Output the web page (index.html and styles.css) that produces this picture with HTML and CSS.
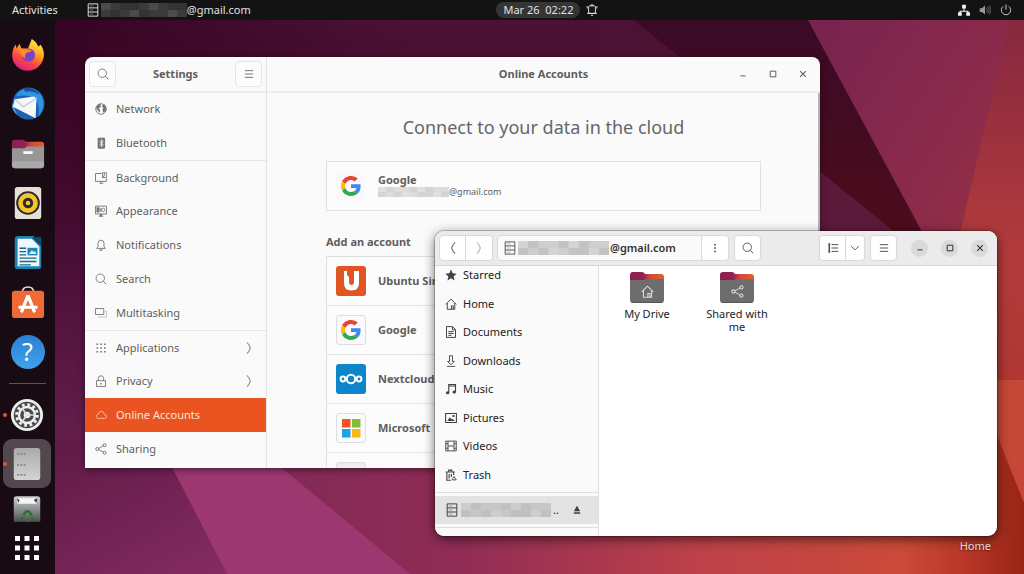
FILE: index.html
```html
<!DOCTYPE html>
<html lang="en">
<head>
<meta charset="utf-8">
<title>Online Accounts</title>
<link rel="stylesheet" href="styles.css">
</head>
<body class="screen">
<svg class="defs" aria-hidden="true">
  <symbol id="server" viewBox="0 0 16 16"><path d="M2.500 1h11v14h-11zM2.500 5.600h11M2.500 10.300h11" fill="none" stroke="currentColor" stroke-width="1.100"/><path d="M4.500 3.300h4M4.500 8h4M4.500 12.700h4" stroke="currentColor" stroke-width=".8" opacity=".6"/></symbol>
  <symbol id="search" viewBox="0 0 16 16"><circle cx="7" cy="7" r="5.600" fill="none" stroke="currentColor" stroke-width="1.200"/><path d="M11 11l4 4" stroke="currentColor" stroke-width="1.300"/></symbol>
  <symbol id="menu" viewBox="0 0 16 16"><path d="M2.500 3.500h11M2.500 8h11M2.500 12.500h11" stroke="currentColor" stroke-width="1.300"/></symbol>
  <symbol id="home" viewBox="0 0 16 16"><path d="M1 8.500L8 1.500l7 7M3 7v8h10V7M8.500 15v-4.500H11V15" fill="none" stroke="currentColor" stroke-width="1.300"/></symbol>
  <symbol id="share" viewBox="0 0 16 16"><path d="M5 7.200l6-3.500M5 8.800l6 3.500" stroke="currentColor" stroke-width="1.200"/><g fill="none" stroke="currentColor" stroke-width="1.300"><circle cx="3" cy="8" r="2"/><circle cx="12.800" cy="3" r="2"/><circle cx="12.800" cy="13" r="2"/></g></symbol>
  <symbol id="min" viewBox="0 0 16 16"><path d="M4 11h8" stroke="currentColor" stroke-width="1.600"/></symbol>
  <symbol id="max" viewBox="0 0 16 16"><path d="M3.500 3.500h9v9h-9z" fill="none" stroke="currentColor" stroke-width="1.600"/></symbol>
  <symbol id="close" viewBox="0 0 16 16"><path d="M3.500 3.500l9 9M12.500 3.500l-9 9" stroke="currentColor" stroke-width="1.700"/></symbol>
  <symbol id="next" viewBox="0 0 16 16"><path d="M5.500 1.500q3 2.500 4 6.500q-1 4-4 6.500" fill="none" stroke="currentColor" stroke-width="1.300"/></symbol>
  <symbol id="google" viewBox="0 0 48 48"><path fill="#ea4335" d="M24 9.500c3.500 0 6.700 1.200 9.200 3.600l6.900-6.900C35.900 2.400 30.500 0 24 0 14.600 0 6.500 5.400 2.600 13.200l8 6.200C12.400 13.700 17.700 9.500 24 9.500z"/><path fill="#4285f4" d="M47 24.600c0-1.600-.2-3.100-.4-4.600H24v9h12.900c-.6 3-2.200 5.500-4.700 7.200l7.700 6C44.400 38 47 32 47 24.600z"/><path fill="#fbbc05" d="M10.500 28.600a14.500 14.500 0 0 1 0-9.200l-8-6.200a24 24 0 0 0 0 21.600z"/><path fill="#34a853" d="M24 48c6.500 0 11.900-2.100 15.900-5.800l-7.700-6c-2.200 1.500-4.900 2.300-8.200 2.300-6.300 0-11.600-4.200-13.500-9.900l-8 6.200C6.500 42.600 14.600 48 24 48z"/></symbol>
  <symbol id="mosaic" viewBox="0 0 9 2" preserveAspectRatio="none"><path d="M0 0h9v2H0z" fill="currentColor" opacity=".6"/><path d="M0 1h1v1H0zM1 0h1v1H1zM2 1h1v1H2zM4 0h1v1H4zM6 0h1v1H6zM5 1h2v1H5zM8 1h1v1H8z" fill="currentColor" opacity=".35"/><path d="M0 0h1v1H0zM3 1h1v1H3zM5 0h1v1H5zM7 1h1v1H7z" fill="#fff" opacity=".12"/></symbol>
  <linearGradient id="folderTab"><stop stop-color="#8a1f50"/><stop offset=".4" stop-color="#96224f"/><stop offset=".6" stop-color="#d04a3a"/><stop offset="1" stop-color="#e4602e"/></linearGradient>
  <symbol id="folder" viewBox="0 0 36 32"><path d="M1 3a3 3 0 0 1 3-3h9q2 0 3 2h16a3 3 0 0 1 3 3v10H1z" fill="url(#folderTab)"/><path d="M1 8h13q2 0 3-1h18v21a3 3 0 0 1-3 3H4a3 3 0 0 1-3-3z" fill="#6d6d6d"/><path d="M3 30.500h30" stroke="#555"/></symbol>
</svg>

<header class="topbar">
  <div class="topbar-left">
    <button class="plain">Activities</button>
    <button class="plain app-menu"><svg class="i14"><use href="#server"/></svg><svg class="mosaic mosaic-dark"><use href="#mosaic"/></svg>@gmail.com</button>
  </div>
  <div class="topbar-mid">
    <button class="plain clock">Mar 26&nbsp; 02:22</button>
    <svg class="i12" viewBox="0 0 16 16"><path d="M3.500 12.500v-9q0-1 1-1h7q1 0 1 1v9zM1.500 12.500h13M6.500 15h3M7 2.500V1h2v1.500M1.500 3v3M14.500 3v3" fill="none" stroke="currentColor" stroke-width="1.300"/></svg>
  </div>
  <div class="topbar-right">
    <svg class="i12" viewBox="0 0 16 16"><path d="M5.500 1h5v5h-5zM0 11h5v4.500H0zM11 11h5v4.500h-5zM7.300 6h1.400v3H14v2h-1.400v-.7H3.400v.7H2V9h5.300z" fill="#f4f4f4"/></svg>
    <svg class="i12" viewBox="0 0 16 16"><path d="M1 5.500h3L8 2v12L4 10.500H1z" fill="#999"/><path d="M10 5q2 3 0 6M12 3.500q3 4.500 0 9M14 2q4 6 0 12" fill="none" stroke="#666" stroke-width="1.200"/></svg>
    <svg class="i12" viewBox="0 0 16 16"><path d="M4.500 3a6.200 6.200 0 1 0 7 0M8 .5v7" fill="none" stroke="#ccc" stroke-width="1.300"/></svg>
  </div>
</header>

<main class="desktop">
  <svg class="wallpaper" viewBox="0 0 1024 574" preserveAspectRatio="none" aria-hidden="true">
    <defs>
      <linearGradient id="w1" x1="0" y1="0" x2="1" y2="0"><stop stop-color="#32021f"/><stop offset=".4" stop-color="#4c1235"/><stop offset="1" stop-color="#4a1230"/></linearGradient>
      <linearGradient id="w2" x1="0" y1="0" x2="0" y2="1"><stop stop-color="#3a0425" stop-opacity="0"/><stop offset=".4" stop-color="#420a2e"/><stop offset="1" stop-color="#68204f"/></linearGradient>
      <linearGradient id="w3" x1="0" y1="0" x2="0" y2="1"><stop stop-color="#3a0a26"/><stop offset="1" stop-color="#4d0c1b"/></linearGradient>
      <linearGradient id="w4" x1="0" y1="0" x2=".6" y2="1"><stop stop-color="#76234f"/><stop offset=".3" stop-color="#85284d"/><stop offset="1" stop-color="#a3353f"/></linearGradient>
      <linearGradient id="w5" x1="0" y1="0" x2="0" y2="1"><stop stop-color="#86283f"/><stop offset=".5" stop-color="#b33b3c"/><stop offset="1" stop-color="#ad3429"/></linearGradient>
      <linearGradient id="w6" x1="0" y1="0" x2="1" y2="0"><stop stop-color="#7f2958"/><stop offset=".28" stop-color="#912d55"/><stop offset=".58" stop-color="#bd4149"/><stop offset=".84" stop-color="#cb4a3a"/><stop offset=".92" stop-color="#ba3828"/><stop offset="1" stop-color="#972516"/></linearGradient>
      <linearGradient id="w7" x1="0" y1="0" x2="1" y2="1"><stop stop-color="#5a1842"/><stop offset="1" stop-color="#862c62"/></linearGradient>
    </defs>
    <path d="M0 0h1024v574H0z" fill="url(#w1)"/>
    <path d="M0 20h600v447H0z" fill="url(#w2)"/>
    <path d="M820 170l75 62h-75z" fill="#5c1a3a"/>
    <path d="M634 20h174l112 210h-28z" fill="url(#w3)"/>
    <path d="M808 20h216v554H960V302z" fill="url(#w4)"/>
    <path d="M1010 20h14v470H900z" fill="url(#w5)"/>
    <path d="M0 440h200l40 134H0z" fill="url(#w7)"/>
    <path d="M158 440h160l100 134H227z" fill="#9c376f"/>
    <path d="M248 440h776v134H410z" fill="url(#w6)"/>
    <path d="M975 380h49v123z" fill="#c54737"/>
  </svg>

  <nav class="dock" aria-label="Dock">
    <div class="dock-apps">
      <button class="plain" aria-label="Firefox"><svg viewBox="0 0 36 36" class="i36"><defs><linearGradient id="ff" x1=".8" y1="0" x2=".3" y2="1"><stop stop-color="#fff04a"/><stop offset=".35" stop-color="#ffaf25"/><stop offset=".65" stop-color="#fb5038"/><stop offset="1" stop-color="#e3188b"/></linearGradient></defs><path d="M22 1c6 4 5 5 7 8q2-1 2-2c5 6 5 14 1 20a17 17 0 0 1-29-1C0 20 1 12 5 7l1 4 3-5 2 5 7 0z" fill="url(#ff)"/><circle cx="18.500" cy="18" r="7" fill="#7542c8"/><path d="M9 11l8 1q4 0 5 2l-6 2q-2 3-1 6-5-3-6-11z" fill="#ff8a2c"/></svg></button>
      <button class="plain" aria-label="Thunderbird"><svg viewBox="0 0 36 36" class="i36"><circle cx="18.500" cy="17.500" r="17" fill="#1b61b5"/><path d="M6 8C12-1 28-1 33 11q4 10-4 21 2-12-3-19-8-6-21-3z" fill="#2f93df"/><path d="M13 1q12-1 17 7-8-5-15-3z" fill="#1a4f9c"/><path d="M1 17q-1 8 6 13l-4-9z" fill="#3c9ce8"/><path d="M4 13l20-3 3 2-1 21L2 21z" fill="#f6f7f9"/><path d="M4 13l9 8 14-9" fill="none" stroke="#c2c7cf" stroke-width="1.200"/></svg></button>
      <button class="plain" aria-label="Files"><svg viewBox="0 0 36 36" class="i36"><path d="M1 6a3 3 0 0 1 3-3h9l3 2h16a3 3 0 0 1 3 3v8H1z" fill="url(#folderTab)"/><path d="M1 12h13l3-2h18v20a3 3 0 0 1-3 3H4a3 3 0 0 1-3-3z" fill="#979797"/><path d="M1 26h34v4a3 3 0 0 1-3 3H4a3 3 0 0 1-3-3z" fill="#aaa"/><path d="M13 15h10v3H13z" fill="#f6f6f6"/></svg></button>
      <button class="plain" aria-label="Rhythmbox"><svg viewBox="0 0 36 36" class="i36"><rect x="4" y="1" width="28" height="34" rx="3" fill="#e6e1d8"/><circle cx="18" cy="18" r="12.500" fill="#292929"/><circle cx="18" cy="18" r="8" fill="none" stroke="#f1c52b" stroke-width="5"/><circle cx="18" cy="18" r="2.500" fill="#f1c52b"/></svg></button>
      <button class="plain" aria-label="Writer"><svg viewBox="0 0 36 36" class="i36"><path d="M4 3a3 3 0 0 1 3-3h17l8 8v24a3 3 0 0 1-3 3H7a3 3 0 0 1-3-3z" fill="#1b83b3"/><path d="M7 3h15l8 8v21H7z" fill="#eef7fb"/><path d="M22 1h10v10z" fill="#0c4a6b"/><path d="M9 13h7M9 16.500h7M9 20h7M9 23.500h18M9 27h18M9 30.500h12" stroke="#17688f" stroke-width="1.400"/><path d="M17.500 12.500H28v8H17.500z" fill="#2186b5"/><path d="M19 19l3-4 2 2 1-1 2 3z" fill="#d9f0fa"/></svg></button>
      <button class="plain" aria-label="Software"><svg viewBox="0 0 36 36" class="i36"><path d="M12 7q0-6 6-6t6 6" fill="none" stroke="#f1d9c8" stroke-width="1.600"/><rect x="1" y="5" width="34" height="29" rx="3" fill="#f06a37"/><path d="M18 10l-7 18M18 10l7 18M8 22.500h20" fill="none" stroke="#fff" stroke-width="3.400"/></svg></button>
      <button class="plain help" aria-label="Help"><span class="help-mark">?</span></button>
    </div>
    <hr class="dock-line">
    <button class="plain running" aria-label="Settings"><svg viewBox="0 0 36 36" class="i36"><circle cx="18" cy="18" r="17" fill="#eee"/><circle cx="18" cy="18" r="14" fill="#4a4a4a"/><circle cx="18" cy="18" r="8.500" fill="none" stroke="#f1f1f1" stroke-width="2.500"/><circle cx="18" cy="18" r="11" fill="none" stroke="#f1f1f1" stroke-width="3" stroke-dasharray="2.880 2.880"/><circle cx="18" cy="18" r="3.500" fill="#eee"/><path d="M18 18h8M18 18l-5-7M18 18l-5 7" stroke="#ddd" stroke-width="1.800"/></svg></button>
    <button class="plain running active" aria-label="Google Drive"><svg viewBox="0 0 36 36" class="i36"><defs><linearGradient id="dr" x1="0" y1="0" x2="0" y2="1"><stop stop-color="#a9abab"/><stop offset="1" stop-color="#d3d4d3"/></linearGradient></defs><rect x="4" y="1" width="28" height="34" rx="3" fill="url(#dr)"/><path d="M7.500 7.500h2m1.500 0h2m1.500 0h2M7.500 19h2m1.500 0h2m1.500 0h2M7.500 29.500h2m1.500 0h2m1.500 0h2" stroke="#7d7d7d" stroke-width="1.600"/></svg></button>
    <button class="plain trash" aria-label="Trash"><svg viewBox="0 0 36 27" class="trash-icon"><defs><linearGradient id="tr" x1="0" y1="0" x2="0" y2="1"><stop stop-color="#d0d0d0"/><stop offset=".5" stop-color="#8d9290"/><stop offset="1" stop-color="#4d4f4d"/></linearGradient></defs><path d="M4 3a3 3 0 0 1 3-3h22a3 3 0 0 1 3 3v24H4z" fill="url(#tr)"/><path d="M7 2h22l-1 6H8z" fill="#f4f4f4"/><path d="M7 2l3 2-1 3zM29 2l-4 2 3 3z" fill="#333"/><path d="M14 20l3-4h3l3 4M23 22l1 4M13 22l-1 4M16 26h4" fill="none" stroke="#2c7030" stroke-width="2.600"/></svg></button>
    <button class="plain show-apps" aria-label="Show Applications"><svg viewBox="0 0 24 24" class="i24"><path d="M0 0h5v5H0zM9.500 0h5v5h-5zM19 0h5v5h-5zM0 9.500h5v5H0zM9.500 9.500h5v5h-5zM19 9.500h5v5h-5zM0 19h5v5H0zM9.500 19h5v5h-5zM19 19h5v5h-5z" fill="#fff"/></svg></button>
  </nav>

  <span class="home-label">Home</span>

  <section class="window settings" aria-label="Settings">
    <aside class="settings-side">
      <div class="settings-head side-head">
        <button class="tool faint" aria-label="Search"><svg class="i12"><use href="#search"/></svg></button>
        <h1 class="win-title">Settings</h1>
        <button class="tool faint" aria-label="Menu"><svg class="i12"><use href="#menu"/></svg></button>
      </div>
      <nav class="settings-list">
        <a href="#network" class="row"><svg class="i12" viewBox="0 0 16 16"><circle cx="8" cy="8" r="7" fill="none" stroke="currentColor" stroke-width="1.200"/><path d="M2 5q2-4 6-4l-1 2 1 2-3 2 2 3-1 3-2-3-2-2zM10 3l3-1 2 5-1 4-3 2-1-4 1-3-2-1z" fill="currentColor"/></svg>Network</a>
        <a href="#bluetooth" class="row"><svg class="i12" viewBox="0 0 16 16"><rect x="3.500" y="1" width="10" height="14.500" rx="1.500" fill="currentColor"/><path d="M6 5.500l5 5-2.500 2.500V3.500L11 6l-5 5" fill="none" stroke="#fafafa" stroke-width="1.100"/></svg>Bluetooth</a>
        <a href="#background" class="row ruled"><svg class="i12" viewBox="0 0 16 16"><path d="M9 2H.7v10.500h14.600V9M6 15h5M8 12.500V15M10 1h5.500v6.500H10zM10 7.500l2-2 1-4" fill="none" stroke="currentColor" stroke-width="1.200"/></svg>Background</a>
        <a href="#appearance" class="row"><svg class="i12" viewBox="0 0 16 16"><path d="M.7 1.500h14.600v10.500H.7zM5 15h6" fill="none" stroke="currentColor" stroke-width="1.200"/><path d="M2 3h4v7H2zM7 4h1.500v5H7zM6.500 12h3v3h-3z" fill="currentColor"/><circle cx="11" cy="6.500" r="2.300" fill="none" stroke="currentColor"/></svg>Appearance</a>
        <a href="#notifications" class="row"><svg class="i12" viewBox="0 0 16 16"><path d="M2 12.500l2-2V6q0-4.500 4-4.500T12 6v4.500l2 2zM6.500 13v2h3v-2" fill="none" stroke="currentColor" stroke-width="1.200"/></svg>Notifications</a>
        <a href="#search-page" class="row"><svg class="i12"><use href="#search"/></svg>Search</a>
        <a href="#multitasking" class="row"><svg class="i12" viewBox="0 0 16 16"><path d="M.7 2h11v8h-11z" fill="none" stroke="currentColor" stroke-width="1.200"/><path d="M13.500 6h2v7.500H5V12" fill="none" stroke="currentColor" opacity=".5"/></svg>Multitasking</a>
        <a href="#applications" class="row ruled"><svg class="i12" viewBox="0 0 16 16"><path d="M2 3h2.200M7 3h2.200M12 3h2.200M2 8h2.200M7 8h2.200M12 8h2.200M2 13h2.200M7 13h2.200M12 13h2.200" stroke="currentColor" stroke-width="2.200"/></svg>Applications<svg class="i14 chevron"><use href="#next"/></svg></a>
        <a href="#privacy" class="row"><svg class="i12" viewBox="0 0 16 16"><path d="M2 7.500h12v7.800H2zM4.500 7.500V4.500q0-3.500 3.500-3.500t3.500 3.500v3" fill="none" stroke="currentColor" stroke-width="1.200"/><path d="M7 10.500h2v2H7z" fill="currentColor"/></svg>Privacy<svg class="i14 chevron"><use href="#next"/></svg></a>
        <a href="#accounts" class="row selected" aria-current="page"><svg class="i12" viewBox="0 0 16 16"><path d="M3.500 12.500a3 3 0 0 1 0-5.500h1q.5-4 4-4t4 4.500q3 .3 3 2.500t-3 2.500z" fill="none" stroke="currentColor" stroke-width="1.100"/></svg>Online Accounts</a>
        <a href="#sharing" class="row"><svg class="i12"><use href="#share"/></svg>Sharing</a>
      </nav>
    </aside>
    <div class="settings-main">
      <div class="settings-head main-head">
        <h2 class="win-title">Online Accounts</h2>
        <div class="win-buttons">
          <button class="plain" aria-label="Minimize"><svg class="i10"><use href="#min"/></svg></button>
          <button class="plain" aria-label="Maximize"><svg class="i10"><use href="#max"/></svg></button>
          <button class="plain" aria-label="Close"><svg class="i10"><use href="#close"/></svg></button>
        </div>
      </div>
      <div class="settings-body">
        <p class="headline">Connect to your data in the cloud</p>
        <button class="account card"><span class="logo borderless"><svg class="i20"><use href="#google"/></svg></span><span class="account-text"><b>Google</b><small><svg class="mosaic mosaic-soft"><use href="#mosaic"/></svg>@gmail.com</small></span></button>
        <h3 class="add-title">Add an account</h3>
        <div class="providers">
          <button class="account"><span class="logo ubuntu"><svg viewBox="0 0 30 30" class="i30"><path d="M8 5h5v11q0 3 2.500 3t2.500-3V5h5v12q0 7.500-7.500 7.500T8 17z" fill="#fff"/><path d="M13 5v6l-2-2V5z" fill="#e05523"/></svg></span><b>Ubuntu Single</b></button>
          <button class="account"><span class="logo"><svg class="i20"><use href="#google"/></svg></span><b>Google</b></button>
          <button class="account"><span class="logo nextcloud"><svg viewBox="0 0 30 30" class="i30"><g fill="none" stroke="#fff" stroke-width="2"><circle cx="15" cy="15" r="4.200"/><circle cx="7" cy="15" r="2.400"/><circle cx="23" cy="15" r="2.400"/></g></svg></span><b>Nextcloud</b></button>
          <button class="account"><span class="logo"><svg viewBox="0 0 20 20" class="i20"><path d="M1 1h8.500v8.500H1z" fill="#f05423"/><path d="M11 1h8.500v8.500H11z" fill="#83bc3a"/><path d="M1 11h8.500v8.500H1z" fill="#17a5e8"/><path d="M11 11h8.500v8.500H11z" fill="#fbb61a"/></svg></span><b>Microsoft</b></button>
          <button class="account" aria-label="More"><span class="logo dim"></span></button>
        </div>
      </div>
    </div>
  </section>

  <section class="window files" aria-label="Files">
    <header class="files-head">
      <div class="joined">
        <button class="tool" aria-label="Back"><svg class="i14" viewBox="0 0 16 16"><path d="M10.500 1.500q-3 2.500-4 6.500q1 4 4 6.500" fill="none" stroke="#777" stroke-width="1.300"/></svg></button>
        <button class="tool" aria-label="Forward"><svg class="i14 pale"><use href="#next"/></svg></button>
      </div>
      <div class="joined path">
        <button class="tool path-name"><svg class="i14"><use href="#server"/></svg><svg class="mosaic mosaic-path"><use href="#mosaic"/></svg><b>@gmail.com</b></button>
        <button class="tool" aria-label="Path menu"><svg class="i12" viewBox="0 0 16 16"><path d="M7 2.500h2v2H7zM7 7h2v2H7zM7 11.500h2v2H7z" fill="currentColor"/></svg></button>
      </div>
      <button class="tool" aria-label="Search files"><svg class="i12"><use href="#search"/></svg></button>
      <div class="joined views">
        <button class="tool" aria-label="List view"><svg class="i12" viewBox="0 0 16 16"><path d="M3 1.500v13" stroke="currentColor" stroke-width="2.200"/><path d="M6 3.500h9M6 8h9M6 12.500h9" stroke="currentColor" stroke-width="1.300"/></svg></button>
        <button class="tool narrow" aria-label="View options"><svg class="i10" viewBox="0 0 16 16"><path d="M2 5l6 6 6-6" fill="none" stroke="currentColor" stroke-width="1.500"/></svg></button>
      </div>
      <button class="tool" aria-label="Files menu"><svg class="i12"><use href="#menu"/></svg></button>
      <div class="round-buttons">
        <button class="round" aria-label="Minimize"><svg class="i10"><use href="#min"/></svg></button>
        <button class="round" aria-label="Maximize"><svg class="i10"><use href="#max"/></svg></button>
        <button class="round" aria-label="Close"><svg class="i10"><use href="#close"/></svg></button>
      </div>
    </header>
    <div class="files-body">
      <aside class="places">
        <nav class="places-list">
          <a href="#starred" class="place"><svg class="i12" viewBox="0 0 16 16"><path d="M8 .8l2.200 5 5.300.5-4 3.600 1.200 5.300L8 12.400l-4.700 2.800 1.200-5.300-4-3.600 5.300-.5z" fill="currentColor"/></svg>Starred</a>
          <a href="#home-dir" class="place"><svg class="i12"><use href="#home"/></svg>Home</a>
          <a href="#documents" class="place"><svg class="i12" viewBox="0 0 16 16"><path d="M2 .8h8l4 4v10.400H2zM10 1v4h4M4.500 7.500h7M4.500 10h7M4.500 12.500h4" fill="none" stroke="currentColor" stroke-width="1.300"/></svg>Documents</a>
          <a href="#downloads" class="place"><svg class="i12" viewBox="0 0 16 16"><path d="M6 1h4v7.500h2.500L8 13 3.500 8.500H6zM2.500 15.200h11" fill="none" stroke="currentColor" stroke-width="1.200"/></svg>Downloads</a>
          <a href="#music" class="place"><svg class="i12" viewBox="0 0 16 16"><path d="M5 13V2h9v10M5 4h9" fill="none" stroke="currentColor" stroke-width="1.500"/><ellipse cx="3.500" cy="13" rx="2.300" ry="2" fill="currentColor"/><ellipse cx="12.300" cy="12" rx="2.300" ry="2" fill="currentColor"/></svg>Music</a>
          <a href="#pictures" class="place"><svg class="i12" viewBox="0 0 16 16"><path d="M.8 2h14.400v12H.8z" fill="none" stroke="currentColor" stroke-width="1.400"/><path d="M3 12l3.500-5 2.500 3 1-1 3 3zM10 4h2.500v2.500H10z" fill="currentColor"/></svg>Pictures</a>
          <a href="#videos" class="place"><svg class="i12" viewBox="0 0 16 16"><path d="M1 1.500h14v13H1zM4 1.500v13M12 1.500v13M4 8h8M1 5h3M1 11h3M12 5h3M12 11h3" fill="none" stroke="currentColor" stroke-width="1.200"/></svg>Videos</a>
          <a href="#trash" class="place"><svg class="i12" viewBox="0 0 16 16"><path d="M1 4h12M5 4V1.500h4V4M2.500 4v11H8M11.500 4v4M5.500 6.500v6M8.500 6.500v4" fill="none" stroke="currentColor" stroke-width="1.500"/><path d="M10 13l2-3 3 4.500H9.500z" fill="none" stroke="currentColor" stroke-width="1.200"/></svg>Trash</a>
        </nav>
        <div class="mounts">
          <a href="#drive" class="place mounted" aria-label="Google Drive"><svg class="i14"><use href="#server"/></svg><svg class="mosaic mosaic-side"><use href="#mosaic"/></svg>..<svg class="i10 eject" viewBox="0 0 16 16"><path d="M8 1l5 9H3zM3 11.500h10V14H3z" fill="currentColor"/></svg></a>
        </div>
      </aside>
      <div class="folders">
        <a href="#my-drive" class="folder"><span class="folder-icon"><svg class="folder-shape"><use href="#folder"/></svg><svg class="emblem"><use href="#home"/></svg></span>My Drive</a>
        <a href="#shared" class="folder"><span class="folder-icon"><svg class="folder-shape"><use href="#folder"/></svg><svg class="emblem"><use href="#share"/></svg></span>Shared with me</a>
      </div>
    </div>
  </section>
</main>
</body>
</html>
```
FILE: styles.css
```css
* { box-sizing: border-box; }

.screen {
  margin: 0;
  min-height: 100vh;
  display: flex;
  flex-direction: column;
  overflow: hidden;
  background: #32021f;
  font: 11px/16px "Noto Sans", "Open Sans", sans-serif;
  color: #333;
}

.defs { position: absolute; width: 0; height: 0; }
svg { display: block; flex: none; }
button { font: inherit; color: inherit; cursor: pointer; }
a { color: inherit; text-decoration: none; }
h1, h2, h3, p, hr { margin: 0; }
b { font-weight: 600; }

.i10 { width: 10px; height: 10px; }
.i12 { width: 12px; height: 12px; }
.i14 { width: 14px; height: 14px; }
.i20 { width: 20px; height: 20px; }
.i24 { width: 24px; height: 24px; }
.i30 { width: 30px; height: 30px; }
.i36 { width: 34px; height: 34px; }

.plain {
  display: flex;
  align-items: center;
  justify-content: center;
  padding: 0;
  border: 0;
  background: none;
}

/* Top bar */
.topbar {
  display: grid;
  grid-template-columns: 7fr auto 6fr;
  align-items: center;
  height: 20px;
  background: #131313;
  color: #e2e2e2;
  position: relative;
  z-index: 1;
}
.topbar-left { display: flex; gap: 28px; padding-left: 12px; }
.topbar-mid { display: flex; align-items: center; gap: 6px; }
.topbar-right { display: flex; justify-content: flex-end; gap: 9px; padding-right: 12px; }
.clock { padding: 0 7px; border-radius: 8px; background: #353535; }
.mosaic { height: 14px; }
.mosaic-dark { width: 86px; margin-left: 1px; color: #4a4a4a; }
.mosaic-soft { width: 71px; height: 10px; color: #c6c6c6; }
.mosaic-path { width: 91px; margin: 0 1px; color: #b0b0b0; }
.mosaic-side { width: 90px; color: #adadad; }

/* Desktop */
.desktop { flex: 1; position: relative; }
.wallpaper { position: absolute; inset: -20px 0 0; width: 100%; height: calc(100% + 20px); }
.home-label {
  position: absolute;
  right: 33px;
  bottom: 20px;
  color: #f3e4e0;
  text-shadow: 0 1px 2px #0008;
}

/* Dock */
.dock {
  position: absolute;
  inset: 0 auto 0 0;
  width: 55px;
  padding: 10px 3px 8px;
  display: flex;
  flex-direction: column;
  background: #190b14;
}
.dock-apps { flex: 1; display: grid; grid-auto-rows: 1fr; }
.dock-line { width: 37px; margin: 6px 6px; border: 0; border-top: 1px solid #5c5258; }
.help-mark {
  width: 34px;
  height: 34px;
  border-radius: 50%;
  background: linear-gradient(#2c7fd2, #3fa2ec);
  color: #fff;
  font-size: 25px;
  line-height: 33px;
}
.running { width: 48px; height: 49px; position: relative; }
.running::before {
  content: "";
  position: absolute;
  left: 0;
  width: 4px;
  height: 4px;
  border-radius: 50%;
  background: #e95420;
}
.active { border-radius: 9px; background: #51474e; }
.trash { width: 48px; height: 42px; }
.trash-icon { width: 34px; height: 26px; }
.show-apps { width: 48px; height: 36px; }

/* Windows */
.window { position: absolute; overflow: hidden; display: flex; }
.win-title { font-size: 11px; line-height: 16px; font-weight: 700; }
.tool {
  display: flex;
  align-items: center;
  justify-content: center;
  width: 27px;
  height: 26px;
  padding: 0;
  border: 1px solid #d9d9d9;
  border-radius: 4px;
  background: #fff;
}

/* Settings */
.settings {
  inset: 37px 204px 106px 85px;
  border-radius: 8px 8px 0 0;
  background: #fafafa;
  color: #5e5e5e;
  box-shadow: 0 2px 7px #0007;
}
.settings-side { width: 182px; border-right: 1px solid #e2e2e2; }
.settings-main { flex: 1; min-width: 0; display: flex; flex-direction: column; }
.settings-head { height: 36px; border-bottom: 2px solid #ececec; align-items: center; }
.side-head { display: flex; justify-content: space-between; padding: 0 4px; }
.faint { border-color: #e6e6e6; background: #fcfcfc; }
.faint svg, .row svg { opacity: .85; }
.main-head { display: grid; grid-template-columns: 1fr auto 1fr; }
.main-head .win-title { grid-column: 2; }
.win-buttons { display: flex; justify-content: flex-end; gap: 20px; padding-right: 12px; }
.settings-list { margin-top: -1px; }
.row { display: flex; align-items: center; gap: 9px; height: 34px; padding: 0 10px; }
.ruled { border-top: 1px solid #e6e6e6; }
.selected { background: #e95420; color: #fbe3da; }
.chevron { margin-left: auto; color: #888; }
.settings-body {
  flex: 1;
  min-height: 0;
  overflow: hidden;
  padding: 22px 57px 0 59px;
  border-right: 2px solid #b4b4b4;
}
.headline { text-align: center; font-size: 18px; line-height: 24px; color: #666; }
.account {
  display: flex;
  align-items: center;
  gap: 12px;
  width: 100%;
  height: 49px;
  padding: 0 9px;
  border: 0;
  border-bottom: 1px solid #e4e4e4;
  background: #fcfcfc;
  text-align: left;
}
.account b { font-weight: 700; white-space: nowrap; }
.card { height: 50px; margin: 22px 0; border: 1px solid #e0e0e0; }
.account-text b, .account-text small { display: flex; align-items: center; line-height: 12px; }
.account-text small { font-size: 9px; }
.add-title { font-size: 11px; line-height: 18px; font-weight: 700; }
.providers { margin-top: 5px; border: 1px solid #e0e0e0; }
.logo {
  display: flex;
  align-items: center;
  justify-content: center;
  width: 30px;
  height: 30px;
  border: 1px solid #dedede;
  border-radius: 3px;
  background: #fafafa;
}
.borderless { border: 0; }
.ubuntu { border: 0; background: #e05523; }
.nextcloud { border: 0; background: #0c85c9; }
.dim { background: #eee; }

/* Files */
.files {
  inset: 211px 27px 38px 435px;
  flex-direction: column;
  border-radius: 9px;
  background: #fff;
  box-shadow: 0 0 0 1px #0003, 0 3px 12px #0009;
}
.files-head {
  display: flex;
  align-items: center;
  gap: 5px;
  height: 35px;
  padding: 0 9px 0 4px;
  border-bottom: 1px solid #d6d6d6;
  background: #ebebeb;
}
.joined { display: flex; }
.joined .tool:first-child { border-radius: 4px 0 0 4px; }
.joined .tool:last-child { border-left: 0; border-radius: 0 4px 4px 0; }
.joined .narrow.tool { width: 19px; }
.pale { color: #bbb; }
.path { width: 232px; margin-left: -1px; }
.path .path-name { flex: 1; justify-content: flex-start; padding-left: 5px; background: #fafafa; }
.files-head > .tool svg, .path-name .i14, .views svg { opacity: .85; }
.views { margin-left: auto; }
.round-buttons { display: flex; gap: 13px; margin-left: 9px; }
.round {
  display: flex;
  align-items: center;
  justify-content: center;
  width: 17px;
  height: 17px;
  padding: 0;
  border: 0;
  border-radius: 50%;
  background: #dadada;
}
.files-body { flex: 1; min-height: 0; display: flex; overflow: hidden; }
.places {
  width: 164px;
  display: flex;
  flex-direction: column;
  border-right: 1px solid #dedede;
  background: #fafafa;
  color: #222;
}
.places-list { flex: 1; min-height: 0; display: grid; grid-auto-rows: 1fr; margin: -5px 0 3px; }
.place { display: flex; align-items: center; gap: 6px; padding-left: 10px; min-height: 0; }
.place svg { opacity: .85; }
.mounts { padding: 3px 0; margin-bottom: 8px; border: solid #e0e0e0; border-width: 1px 0; }
.mounted { height: 28px; gap: 2px; background: #e3e3e3; }
.eject { margin-left: auto; margin-right: 16px; }
.folders { flex: 1; display: flex; flex-wrap: wrap; align-content: flex-start; padding: 6px 3px; }
.folder {
  display: flex;
  flex-direction: column;
  align-items: center;
  width: 90px;
  padding: 0 10px;
  line-height: 13px;
  text-align: center;
  color: #222;
}
.folder-icon { display: grid; place-items: center; margin-bottom: 3px; }
.folder-icon svg { grid-area: 1 / 1; }
.folder-shape { width: 36px; height: 32px; }
.emblem { width: 13px; height: 13px; margin-top: 6px; color: #ddd; }
```
